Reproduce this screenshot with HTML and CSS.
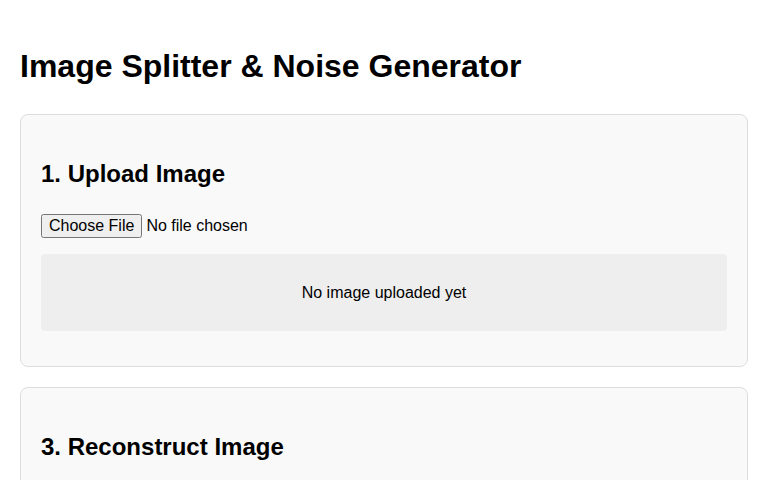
FILE: index.html
```html
<!DOCTYPE html>
<html lang="en">
<head>
<meta charset="utf-8">
<title>Image Splitter &amp; Noise Generator</title>
<link rel="stylesheet" href="styles.css">
</head>
<body>
<h1>Image Splitter &amp; Noise Generator</h1>
<section class="card">
  <h2>1. Upload Image</h2>
  <input class="file" type="file" accept="image/*">
  <div class="preview">No image uploaded yet</div>
</section>
<section class="card">
  <h2>3. Reconstruct Image</h2>
</section>
</body>
</html>
```
FILE: styles.css
```css
body {
  margin: 0;
  padding: 20px;
  font-family: "Liberation Sans", Arial, sans-serif;
  line-height: 1.6;
  color: #000;
  background: #fff;
}
h1 {
  font-size: 32px;
  margin: 21.44px 0;
}
h2 {
  font-size: 24px;
  margin: 19.92px 0;
}
.card {
  background: #f9f9f9;
  border: 1px solid #ddd;
  border-radius: 8px;
  padding: 20px;
  margin-bottom: 20px;
}
.file {
  font-family: inherit;
  font-size: 16px;
}
.preview {
  background: #eee;
  border-radius: 4px;
  margin: 15px 0;
  padding: 25.7px 20px;
  text-align: center;
}
```
